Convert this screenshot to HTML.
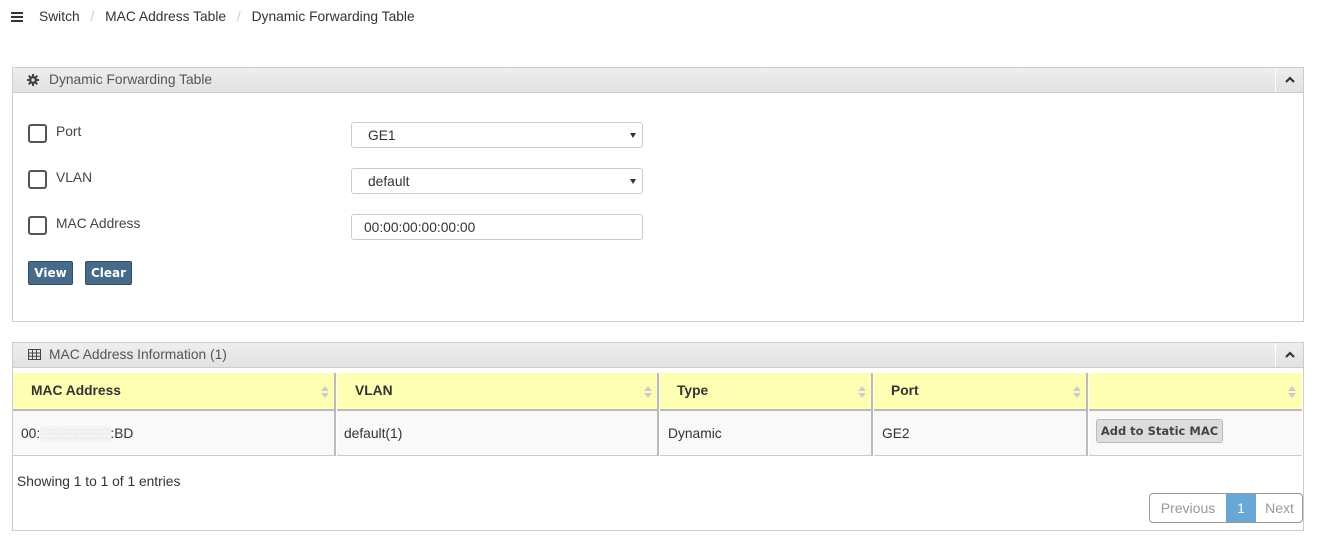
<!DOCTYPE html>
<html><head><style>
*{box-sizing:border-box;margin:0;padding:0}
body{width:1317px;height:543px;background:#fff;font-family:"Liberation Sans",Arial,sans-serif;font-size:13.8px;color:#333;position:relative;overflow:hidden}
.a{position:absolute}
.panel{position:absolute;left:12px;width:1292px;border:1px solid #ccc}
.ph{height:25px;background:linear-gradient(#eee,#e2e2e2);border-bottom:1px solid #ccc;position:relative;color:#555;font-size:13.8px;line-height:24px;padding-left:36px}
.col{position:absolute;right:0;top:0;width:28px;height:24px;border-left:1px solid #fff;text-align:center}
.cb{position:absolute;left:28px;width:19px;height:19px;border:2px solid #555;border-radius:3px}
.lbl{position:absolute;left:56px;font-size:13.8px;color:#444}
.sel{position:absolute;left:351px;width:292px;height:26px;border:1px solid #ccc;border-radius:3px;padding-left:16px;line-height:25px;font-size:13.8px;color:#333}
.dd:after{content:"";position:absolute;right:6px;top:10px;border-left:3px solid transparent;border-right:3px solid transparent;border-top:5px solid #333}
.btn{position:absolute;top:261px;height:24px;background:#466b8a;border:1px solid #2f4d66;border-radius:2px;color:#fff;font-family:"DejaVu Sans",sans-serif;font-weight:bold;font-size:12px;line-height:22px;text-align:center}
.th{position:absolute;top:373px;height:38px;background:#ffffb3;border-bottom:2px solid #bbb;font-weight:bold;font-size:13.8px;line-height:36px;color:#333}
.td{position:absolute;top:411px;height:45px;background:#f9f9f9;border-bottom:1px solid #ccc;line-height:45px;font-size:13.8px;color:#333}
.sep{position:absolute;top:373px;width:2px;height:83px;background:#bbb}
.sort{position:absolute;right:6px;top:13px;width:8px}
.sort:before{content:"";position:absolute;top:0;border-left:4px solid transparent;border-right:4px solid transparent;border-bottom:5px solid #ccc}
.sort:after{content:"";position:absolute;top:7px;border-left:4px solid transparent;border-right:4px solid transparent;border-top:5px solid #ccc}
</style></head><body>
<div class="a" style="left:11px;top:12px;width:12px;height:2px;background:#333;box-shadow:0 4px 0 #333,0 8px 0 #333"></div>
<div class="a" style="left:39px;top:9px;color:#333">Switch <span style="color:#ccc;padding:0 7px">/</span> MAC Address Table <span style="color:#ccc;padding:0 7px">/</span> Dynamic Forwarding Table</div>

<div class="panel" style="top:67px;height:255px">
<div class="ph"><svg class="a" style="left:14px;top:6px" width="12" height="12" viewBox="0 0 12 12"><g fill="#444"><circle cx="6" cy="6" r="4"/><rect x="5" y="0" width="2" height="12"/><rect x="0" y="5" width="12" height="2"/><rect x="5" y="0" width="2" height="12" transform="rotate(45 6 6)"/><rect x="5" y="0" width="2" height="12" transform="rotate(-45 6 6)"/></g><circle cx="6" cy="6" r="1.6" fill="#e8e8e8"/></svg>Dynamic Forwarding Table<div class="col"><svg width="10" height="8" viewBox="0 0 10 8" style="margin-top:8px"><path d="M1 6L5 2L9 6" stroke="#333" stroke-width="2.2" fill="none"/></svg></div></div>
</div>
<div class="cb" style="top:124px"></div><div class="lbl" style="top:124px">Port</div>
<div class="sel dd" style="top:122px">GE1</div>
<div class="cb" style="top:170px"></div><div class="lbl" style="top:170px">VLAN</div>
<div class="sel dd" style="top:168px">default</div>
<div class="cb" style="top:216px"></div><div class="lbl" style="top:216px">MAC Address</div>
<div class="sel" style="top:214px;padding-left:12px">00:00:00:00:00:00</div>
<div class="btn" style="left:28px;width:45px">View</div>
<div class="btn" style="left:85px;width:47px">Clear</div>

<div class="panel" style="top:342px;height:189px">
<div class="ph"><svg class="a" style="left:15px;top:6px" width="13" height="11" viewBox="0 0 13 11"><path d="M0.5 0.5H12.5V10.5H0.5ZM0.5 4H12.5M0.5 7.3H12.5M4.5 0.5V10.5M8.5 0.5V10.5" stroke="#444" fill="none"/></svg>MAC Address Information (1)<div class="col"><svg width="10" height="8" viewBox="0 0 10 8" style="margin-top:8px"><path d="M1 6L5 2L9 6" stroke="#333" stroke-width="2.2" fill="none"/></svg></div></div>
</div>
<div class="th" style="left:13px;width:322px;padding-left:18px">MAC Address<span class="sort"></span></div>
<div class="th" style="left:337px;width:321px;padding-left:18px">VLAN<span class="sort"></span></div>
<div class="th" style="left:660px;width:212px;padding-left:17px">Type<span class="sort"></span></div>
<div class="th" style="left:874px;width:213px;padding-left:17px">Port<span class="sort"></span></div>
<div class="th" style="left:1089px;width:213px"><span class="sort"></span></div>
<div class="td" style="left:13px;width:322px;padding-left:8px">00:<span style="color:#ddd;letter-spacing:-1px">▒▒▒▒▒▒▒▒</span>:BD</div>
<div class="td" style="left:337px;width:321px;padding-left:7px">default(1)</div>
<div class="td" style="left:660px;width:212px;padding-left:8px">Dynamic</div>
<div class="td" style="left:874px;width:213px;padding-left:8px">GE2</div>
<div class="td" style="left:1089px;width:213px"></div>
<div class="sep" style="left:334px"></div><div class="sep" style="left:657px"></div><div class="sep" style="left:871px"></div><div class="sep" style="left:1086px"></div>
<div class="a" style="left:1096px;top:419px;width:127px;height:24px;background:#ddd;border:1px solid #bbb;border-radius:3px;font-family:'DejaVu Sans',sans-serif;font-weight:bold;font-size:11.5px;line-height:22px;text-align:center;color:#444">Add to Static MAC</div>
<div class="a" style="left:17px;top:474px">Showing 1 to 1 of 1 entries</div>
<div class="a" style="left:1149px;top:493px;width:154px;height:30px;border:1px solid #999;border-radius:4px;overflow:hidden;font-size:14px;line-height:28px;color:#999">
<span class="a" style="left:0;width:76px;text-align:center">Previous</span>
<span class="a" style="left:76px;width:30px;height:30px;background:#69a7d7;color:#fff;text-align:center">1</span>
<span class="a" style="left:106px;width:47px;text-align:center">Next</span>
</div>
</body></html>
